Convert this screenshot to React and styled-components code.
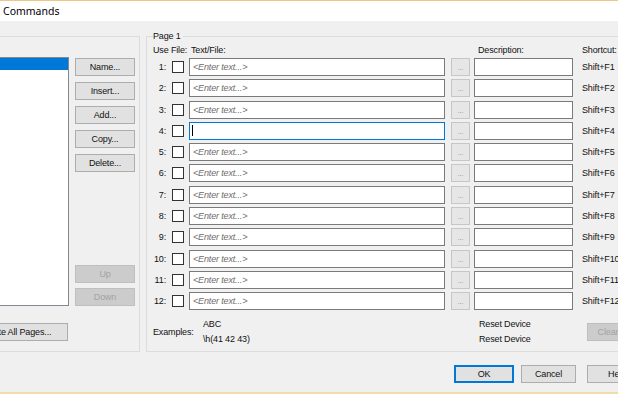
import styled, { createGlobalStyle } from 'styled-components';

const GlobalStyle = createGlobalStyle`
  html, body {
    margin: 0;
    padding: 0;
    background: #f0f0f0;
  }
  #root {
    width: 618px;
    height: 394px;
    overflow: hidden;
  }
`

const Window = styled.div`
  width: 618px;
  height: 394px;
  box-sizing: border-box;
  overflow: hidden;
  display: flex;
  flex-direction: column;
  background: #f0f0f0;
  border-top: 1px solid #e9c983;
  border-bottom: 2px solid #f2dba6;
  font-family: "Liberation Sans", Arial, sans-serif;
  font-size: 9px;
  letter-spacing: -0.15px;
  color: #111;
`

const TitleBar = styled.div`
  height: 20px;
  flex: none;
  background: #fff;
  display: flex;
  align-items: center;
  padding-left: 3px;
  font-family: "Noto Sans", "Open Sans", sans-serif;
  font-size: 10.5px;
  letter-spacing: 0;
  color: #000;
`

const Content = styled.div`
  padding-top: 15px;
  display: flex;
  flex-direction: column;
`

const GroupsRow = styled.div`
  display: flex;
  gap: 6px;
  height: 316px;
`

const LeftGroup = styled.div`
  flex: none;
  width: 220px;
  margin-left: -80px;
  box-sizing: border-box;
  border: 1px solid #dcdcdc;
  padding: 20px 4px 0 0;
  display: grid;
  grid-template-columns: 1fr 60px;
  grid-template-rows: 249px 18px;
  column-gap: 6px;
  row-gap: 17px;
`

const ListBox = styled.div`
  background: #fff;
  border: 1px solid #828790;
`

const SelectedItem = styled.div`
  height: 12px;
  background: #0078d7;
`

const ButtonColumn = styled.div`
  display: flex;
  flex-direction: column;
  gap: 6px;
  padding-top: 1px;
`

const MoveButtons = styled.div`
  margin-top: auto;
  display: flex;
  flex-direction: column;
  gap: 5px;
`

const Button = styled.div`
  box-sizing: border-box;
  width: ${p => p.$w || 60}px;
  height: 18px;
  flex: none;
  display: flex;
  align-items: center;
  justify-content: center;
  background: ${p => p.$disabled ? '#cccccc' : '#e1e1e1'};
  border: ${p => p.$default ? '2px solid #0078d7' : `1px solid ${p.$disabled ? '#bfbfbf' : '#adadad'}`};
  color: ${p => p.$disabled ? '#a3a3a3' : '#111'};
  white-space: nowrap;
`

const DeleteAllButton = styled(Button)`
  grid-column: 1;
  justify-self: end;
  margin-right: 1px;
`

const RightGroup = styled.div`
  flex: none;
  width: 520px;
  box-sizing: border-box;
  border: 1px solid #dcdcdc;
  padding-left: 6px;
  display: flex;
  flex-direction: column;
`

const Legend = styled.div`
  margin-top: -7px;
  height: 12px;
  line-height: 12px;
  align-self: flex-start;
  background: #f0f0f0;
  padding-right: 2px;
`

const columns = '19px 17px 262px 23px 106px 60px'

const HeaderRow = styled.div`
  margin-top: 2px;
  height: 14px;
  display: grid;
  grid-template-columns: ${columns};
  line-height: 12px;
`

const HeaderCell = styled.div`
  grid-column: ${p => p.$col};
  padding-left: ${p => p.$pad || 0}px;
  white-space: nowrap;
`

const RowsGrid = styled.div`
  display: grid;
  grid-template-columns: ${columns};
  grid-auto-rows: 18px;
  row-gap: 3.3px;
  align-items: center;
`

const RowLabel = styled.div`
  text-align: right;
  padding-right: 6px;
  white-space: nowrap;
`

const CheckBox = styled.div`
  width: 12px;
  height: 12px;
  box-sizing: border-box;
  border: 1px solid #333;
  background: #fff;
`

const TextBox = styled.div`
  box-sizing: border-box;
  width: ${p => p.$w}px;
  height: 18px;
  background: #fff;
  border: 1px solid ${p => p.$focused ? '#0078d7' : '#7a7a7a'};
  display: flex;
  align-items: center;
  padding-left: 3px;
`

const Placeholder = styled.span`
  font-style: italic;
  color: #6d6d6d;
  white-space: nowrap;
`

const Caret = styled.span`
  width: 1px;
  height: 11px;
  background: #000;
  margin-left: -1px;
`

const BrowseButton = styled.div`
  box-sizing: border-box;
  width: 19px;
  height: 18px;
  background: #e6e6e6;
  border: 1px solid #c6c6c6;
  color: #8c8c8c;
  display: flex;
  align-items: flex-end;
  justify-content: center;
  padding-bottom: 4px;
  font-size: 7px;
  line-height: 7px;
`

const Shortcut = styled.div`
  padding-left: 2px;
  white-space: nowrap;
`

const Examples = styled.div`
  margin-top: 8px;
  display: grid;
  grid-template-columns: 50px 276px 108px 60px;
  grid-template-rows: 12px 12px;
  row-gap: 3px;
  line-height: 12px;
`

const ExamplesLabel = styled.div`
  grid-row: 1 / 3;
  align-self: center;
`

const ExampleText = styled.div`
  grid-column: ${p => p.$col};
  grid-row: ${p => p.$row};
  white-space: nowrap;
`

const ClearButton = styled(Button)`
  grid-column: 4;
  grid-row: 1 / 3;
  align-self: center;
`

const BottomButtons = styled.div`
  margin-top: 13px;
  padding-left: 454px;
  display: flex;
`

const rows = Array.from({ length: 12 }, (_, i) => i + 1)

function App() {
  return (
    <Window>
      <GlobalStyle />
      <TitleBar>Commands</TitleBar>
      <Content>
        <GroupsRow>
          <LeftGroup>
            <ListBox>
              <SelectedItem />
            </ListBox>
            <ButtonColumn>
              <Button>Name...</Button>
              <Button>Insert...</Button>
              <Button>Add...</Button>
              <Button>Copy...</Button>
              <Button>Delete...</Button>
              <MoveButtons>
                <Button $disabled>Up</Button>
                <Button $disabled>Down</Button>
              </MoveButtons>
            </ButtonColumn>
            <DeleteAllButton $w={104}>Delete All Pages...</DeleteAllButton>
          </LeftGroup>

          <RightGroup>
            <Legend>Page 1</Legend>
            <HeaderRow>
              <HeaderCell $col="1 / 3">Use File:</HeaderCell>
              <HeaderCell $col={3} $pad={2}>Text/File:</HeaderCell>
              <HeaderCell $col={5} $pad={4}>Description:</HeaderCell>
              <HeaderCell $col={6} $pad={2}>Shortcut:</HeaderCell>
            </HeaderRow>
            <RowsGrid>
              {rows.map(n => [
                <RowLabel key={`l${n}`}>{n}:</RowLabel>,
                <CheckBox key={`c${n}`} />,
                <TextBox key={`t${n}`} $w={256} $focused={n === 4}>
                  {n === 4 ? <Caret /> : <Placeholder>&lt;Enter text...&gt;</Placeholder>}
                </TextBox>,
                <BrowseButton key={`b${n}`}>...</BrowseButton>,
                <TextBox key={`d${n}`} $w={99} />,
                <Shortcut key={`s${n}`}>Shift+F{n}</Shortcut>,
              ])}
            </RowsGrid>
            <Examples>
              <ExamplesLabel>Examples:</ExamplesLabel>
              <ExampleText $col={2} $row={1}>ABC</ExampleText>
              <ExampleText $col={3} $row={1}>Reset Device</ExampleText>
              <ClearButton $disabled $w={42}>Clear</ClearButton>
              <ExampleText $col={2} $row={2}>\h(41 42 43)</ExampleText>
              <ExampleText $col={3} $row={2}>Reset Device</ExampleText>
            </Examples>
          </RightGroup>
        </GroupsRow>

        <BottomButtons>
          <Button $default $w={60}>OK</Button>
          <Button $w={55} style={{ marginLeft: 7 }}>Cancel</Button>
          <Button $w={60} style={{ marginLeft: 11 }}>Help</Button>
        </BottomButtons>
      </Content>
    </Window>
  )
}

export default App;
